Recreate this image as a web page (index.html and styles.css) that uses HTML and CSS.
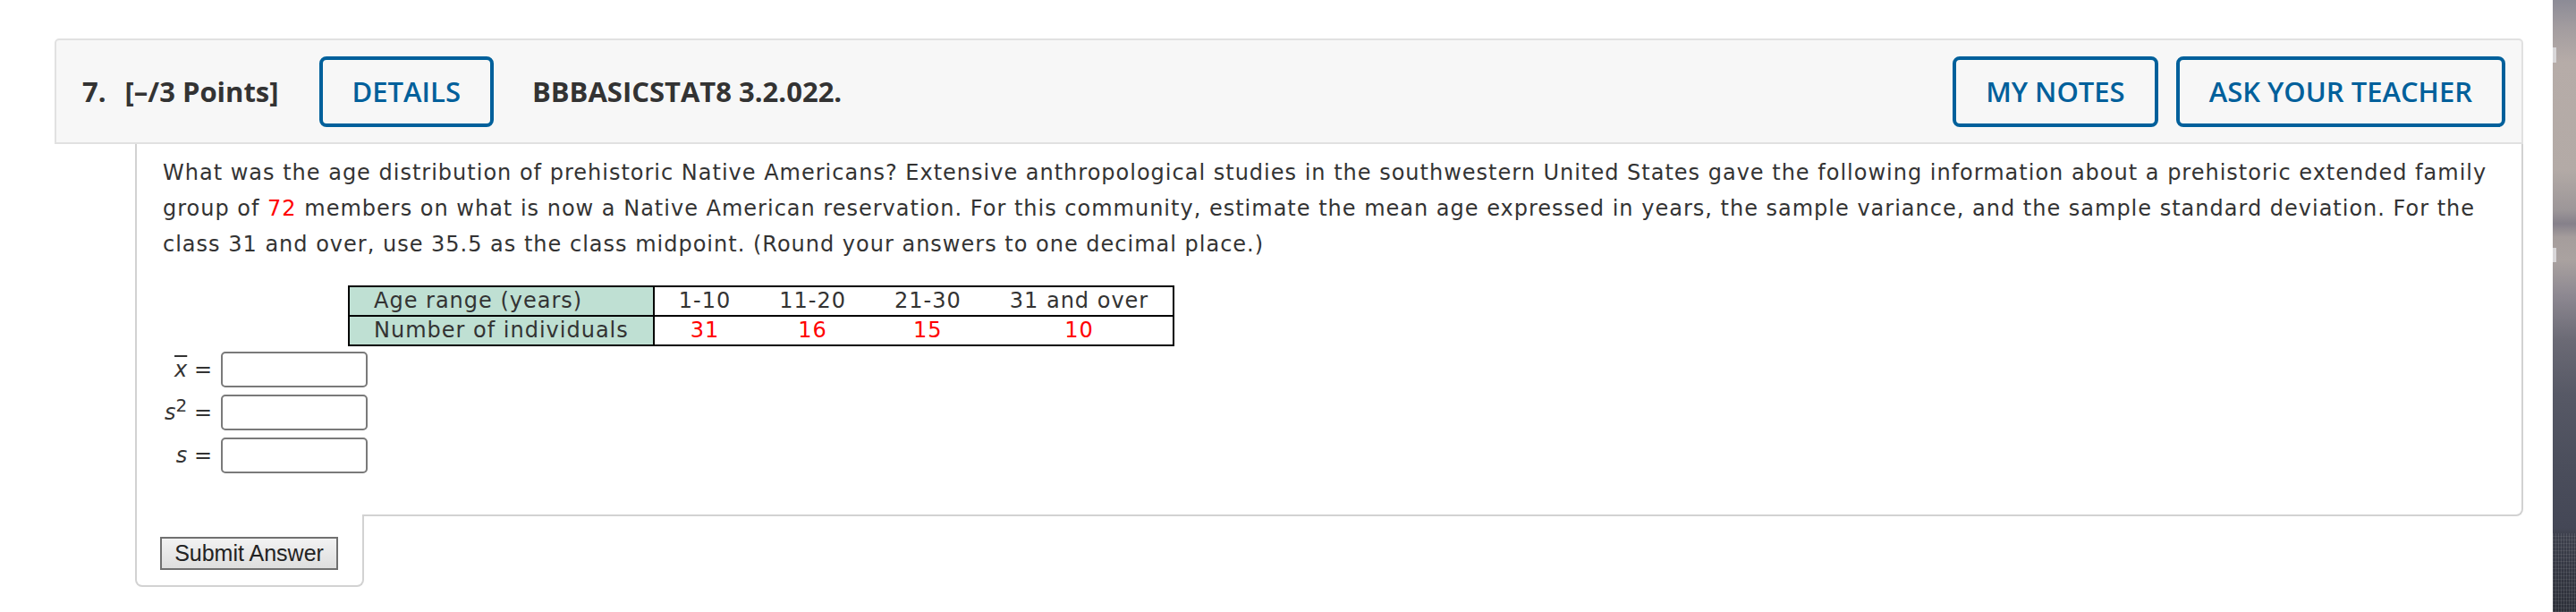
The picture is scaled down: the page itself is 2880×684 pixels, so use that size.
FILE: index.html
```html
<!DOCTYPE html>
<html lang="en">
<head>
<meta charset="utf-8">
<title>Question 7</title>
<link rel="stylesheet" href="styles.css">
</head>
<body>
<div class="screen">
  <main class="page">
    <section class="question">
      <header class="qhead">
        <span class="qnum">7.</span>
        <span class="qpoints">[–/3 Points]</span>
        <button class="hbtn">DETAILS</button>
        <span class="qcode">BBBASICSTAT8 3.2.022.</span>
        <span class="spacer"></span>
        <div class="hactions">
          <button class="hbtn">MY NOTES</button>
          <button class="hbtn">ASK YOUR TEACHER</button>
        </div>
      </header>
      <div class="qbody">
        <p class="prompt">What was the age distribution of prehistoric Native Americans? Extensive anthropological studies in the southwestern United States gave the following information about a prehistoric extended family<br>group of <span class="red">72</span> members on what is now a Native American reservation. For this community, estimate the mean age expressed in years, the sample variance, and the sample standard deviation. For the<br>class 31 and over, use 35.5 as the class midpoint. (Round your answers to one decimal place.)</p>
        <table class="data">
          <tr>
            <th>Age range (years)</th>
            <td>1-10</td>
            <td>11-20</td>
            <td>21-30</td>
            <td>31 and over</td>
          </tr>
          <tr>
            <th>Number of individuals</th>
            <td class="red">31</td>
            <td class="red">16</td>
            <td class="red">15</td>
            <td class="red">10</td>
          </tr>
        </table>
        <div class="answers">
          <span class="lbl"><i class="bar">x</i> =</span><input class="ans" type="text">
          <span class="lbl"><i>s</i><sup>2</sup> =</span><input class="ans" type="text">
          <span class="lbl"><i>s</i> =</span><input class="ans" type="text">
        </div>
      </div>
      <div class="qfoot">
        <button class="submit">Submit Answer</button>
      </div>
    </section>
  </main>
  <aside class="desktop">
    <span class="tick tick-top"></span>
    <span class="tick tick-mid"></span>
  </aside>
</div>
</body>
</html>
```

FILE: styles.css
```css
html, body {
  margin: 0;
  padding: 0;
  background: #ffffff;
}

.screen {
  display: flex;
  width: 2880px;
  height: 684px;
  overflow: hidden;
}

.page {
  flex: 1;
  background: #ffffff;
}

.desktop {
  position: relative;
  width: 26px;
  height: 684px;
  background:
    repeating-linear-gradient(90deg, rgba(255,255,255,0.10) 0 1px, rgba(0,0,0,0) 1px 3px) 0 596px / 100% 88px no-repeat,
    repeating-linear-gradient(0deg, rgba(255,255,255,0.08) 0 1px, rgba(0,0,0,0) 1px 4px) 0 596px / 100% 88px no-repeat,
    linear-gradient(to bottom,
      #8c8b96 0px,
      #a29c9f 30px,
      #b6aca8 70px,
      #b3aaa6 190px,
      #9c9698 235px,
      #85808a 250px,
      #a59d9c 265px,
      #aaa2a0 290px,
      #8d8891 330px,
      #6b6a75 380px,
      #575966 440px,
      #4b4e5c 520px,
      #444756 590px,
      #3c3f4b 600px,
      #333641 640px,
      #2c2f38 684px);
}

.tick {
  position: absolute;
  left: 0;
  width: 4px;
  background: #d8d6d8;
}

.tick-top {
  top: 53px;
  height: 17px;
}

.tick-mid {
  top: 277px;
  height: 16px;
}

.question {
  margin: 43px 0 0 61px;
  width: 2760px;
  color: #333333;
}

.qhead {
  display: flex;
  align-items: center;
  box-sizing: border-box;
  height: 118px;
  padding: 0 18px 0 29px;
  background: #f7f7f7;
  border: 2px solid #e1e1e1;
  border-radius: 5px 5px 0 0;
  font-family: "Open Sans", "Liberation Sans", sans-serif;
  font-weight: 700;
  font-size: 31px;
  color: #333333;
}

.qnum {
  margin-right: 21px;
}

.qpoints {
  margin-right: 45px;
}

.qcode {
  margin-left: 43px;
}

.spacer {
  flex: 1;
}

.hactions {
  display: flex;
  gap: 20px;
}

.hbtn {
  box-sizing: border-box;
  height: 79px;
  padding: 0 33px;
  background: #f7f7f7;
  border: 4px solid #00609b;
  border-radius: 8px;
  color: #00609b;
  font-family: "Open Sans", "Liberation Sans", sans-serif;
  font-weight: 600;
  font-size: 31px;
}

.qbody {
  margin-left: 90px;
  padding: 12px 30px 46px 29px;
  border-left: 2px solid #d2d2d2;
  border-right: 2px solid #d2d2d2;
  border-bottom: 2px solid #d2d2d2;
  border-radius: 0 0 8px 0;
  font-family: "DejaVu Sans", Verdana, sans-serif;
  font-size: 24px;
  letter-spacing: 1px;
  color: #333333;
}

.prompt {
  margin: 0;
  line-height: 40px;
  white-space: nowrap;
}

.red {
  color: #ff0000;
}

.data {
  margin: 26px 0 0 207px;
  border-collapse: collapse;
  border: 2px solid #000000;
  font-size: 24px;
}

.data th,
.data td {
  height: 31px;
  padding: 0 27px;
  line-height: 31px;
  font-weight: 400;
  white-space: nowrap;
}

.data tr + tr th,
.data tr + tr td {
  border-top: 2px solid #000000;
}

.data th {
  text-align: left;
  background: #bfe0d3;
  border-right: 2px solid #000000;
}

.data td {
  text-align: center;
}

.answers {
  display: grid;
  grid-template-columns: 55px 164px;
  column-gap: 10px;
  row-gap: 8px;
  margin-top: 6px;
  align-items: center;
}

.lbl {
  text-align: right;
  white-space: nowrap;
  font-size: 24px;
  letter-spacing: 0;
}

.lbl sup {
  font-size: 20px;
  line-height: 0;
}

.bar {
  text-decoration: overline;
}

.ans {
  box-sizing: border-box;
  width: 164px;
  height: 40px;
  margin: 0;
  border: 2px solid #7a7a7a;
  border-radius: 5px;
  background: #ffffff;
}

.qfoot {
  box-sizing: border-box;
  width: 256px;
  height: 81px;
  margin: -2px 0 0 90px;
  padding: 25px 0 0 26px;
  background: #ffffff;
  border-left: 2px solid #d2d2d2;
  border-right: 2px solid #d2d2d2;
  border-bottom: 2px solid #d2d2d2;
  border-radius: 0 0 8px 8px;
}

.submit {
  box-sizing: border-box;
  width: 199px;
  height: 37px;
  padding: 0;
  border: 2px solid #707070;
  border-radius: 0;
  background: linear-gradient(to bottom, #f2f2f2, #dedede);
  color: #222222;
  font-family: "Liberation Sans", Arial, sans-serif;
  font-size: 25px;
}
```
